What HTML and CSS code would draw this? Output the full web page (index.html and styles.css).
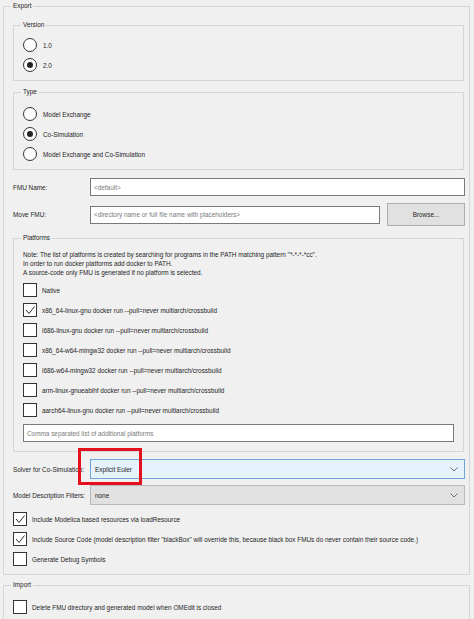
FILE: index.html
```html
<!DOCTYPE html>
<html>
<head>
<meta charset="utf-8">
<link rel="stylesheet" href="styles.css">
</head>
<body>
<div class="page">
  <fieldset class="group export">
    <legend>Export</legend>
    <fieldset class="group sub version">
      <legend>Version</legend>
      <div class="radio-row"><span class="radio"></span><span>1.0</span></div>
      <div class="radio-row"><span class="radio checked"></span><span>2.0</span></div>
    </fieldset>
    <fieldset class="group sub type">
      <legend>Type</legend>
      <div class="radio-row"><span class="radio"></span><span>Model Exchange</span></div>
      <div class="radio-row"><span class="radio checked"></span><span>Co-Simulation</span></div>
      <div class="radio-row"><span class="radio"></span><span>Model Exchange and Co-Simulation</span></div>
    </fieldset>
    <div class="form-row name-row">
      <span class="form-label">FMU Name:</span>
      <div class="input">&lt;default&gt;</div>
    </div>
    <div class="form-row move-row">
      <span class="form-label">Move FMU:</span>
      <div class="input">&lt;directory name or full file name with placeholders&gt;</div>
      <div class="button">Browse...</div>
    </div>
    <fieldset class="group sub platforms">
      <legend>Platforms</legend>
      <p class="note">Note: The list of platforms is created by searching for programs in the PATH matching pattern "*-*-*-*cc".<br>In order to run docker platforms add docker to PATH.<br>A source-code only FMU is generated if no platform is selected.</p>
      <div class="check-row"><span class="checkbox"></span><span>Native</span></div>
      <div class="check-row"><span class="checkbox"><svg viewBox="0 0 12 12" width="12" height="12"><polyline points="2,6 5,9.5 10.5,2.5" fill="none" stroke="#2a2a2a" stroke-width="1"/></svg></span><span>x86_64-linux-gnu docker run --pull=never multiarch/crossbuild</span></div>
      <div class="check-row"><span class="checkbox"></span><span>i686-linux-gnu docker run --pull=never multiarch/crossbuild</span></div>
      <div class="check-row"><span class="checkbox"></span><span>x86_64-w64-mingw32 docker run --pull=never multiarch/crossbuild</span></div>
      <div class="check-row"><span class="checkbox"></span><span>i686-w64-mingw32 docker run --pull=never multiarch/crossbuild</span></div>
      <div class="check-row"><span class="checkbox"></span><span>arm-linux-gnueabihf docker run --pull=never multiarch/crossbuild</span></div>
      <div class="check-row"><span class="checkbox"></span><span>aarch64-linux-gnu docker run --pull=never multiarch/crossbuild</span></div>
      <div class="input extra">Comma separated list of additional platforms</div>
    </fieldset>
    <div class="form-row solver-row">
      <span class="form-label">Solver for Co-Simulation:</span>
      <div class="combo active"><span>Explicit Euler</span><svg class="chev" viewBox="0 0 8 5" width="8" height="5"><polyline points="0.5,0.5 4,4 7.5,0.5" fill="none" stroke="#606060" stroke-width="0.9"/></svg></div>
      <div class="highlight"></div>
    </div>
    <div class="form-row filter-row">
      <span class="form-label">Model Description Filters:</span>
      <div class="combo plain"><span>none</span><svg class="chev" viewBox="0 0 8 5" width="8" height="5"><polyline points="0.5,0.5 4,4 7.5,0.5" fill="none" stroke="#606060" stroke-width="0.9"/></svg></div>
    </div>
    <div class="options">
      <div class="check-row"><span class="checkbox"><svg viewBox="0 0 12 12" width="12" height="12"><polyline points="2,6 5,9.5 10.5,2.5" fill="none" stroke="#2a2a2a" stroke-width="1"/></svg></span><span>Include Modelica based resources via loadResource</span></div>
      <div class="check-row"><span class="checkbox"><svg viewBox="0 0 12 12" width="12" height="12"><polyline points="2,6 5,9.5 10.5,2.5" fill="none" stroke="#2a2a2a" stroke-width="1"/></svg></span><span>Include Source Code (model description filter "blackBox" will override this, because black box FMUs do never contain their source code.)</span></div>
      <div class="check-row"><span class="checkbox"></span><span>Generate Debug Symbols</span></div>
    </div>
  </fieldset>
  <fieldset class="group import">
    <legend>Import</legend>
    <div class="check-row"><span class="checkbox"></span><span>Delete FMU directory and generated model when OMEdit is closed</span></div>
  </fieldset>
</div>
</body>
</html>
```
FILE: styles.css
```css
* { box-sizing: border-box; }
html, body { margin: 0; padding: 0; }
body {
  background: #f0f0f0;
  font-family: "Liberation Sans", Arial, sans-serif;
  font-size: 6.4px;
  color: #1e1e1e;
  width: 474px;
  height: 619px;
  overflow: hidden;
}
.page { padding-top: 1px; }
.group {
  margin: 0;
  border: 1px solid #d6d6d6;
  padding: 0;
  min-inline-size: 0;
}
.group > legend {
  padding: 0 2px;
  margin-left: -2px;
  line-height: 10px;
  height: 10px;
}
.export {
  margin: 0 4px 0 3px;
  padding: 9px 4px 5px 9px;
}
.sub { margin-right: 1px; }
.version { padding: 5px 9px 5px 9px; }
.type { margin-top: 6px; padding: 7px 9px 5px 9px; }
.radio-row {
  display: flex;
  align-items: center;
  height: 20px;
  gap: 6px;
}
.radio {
  width: 14px;
  height: 14px;
  border: 1px solid #333;
  border-radius: 50%;
  background: #fff;
  display: flex;
  align-items: center;
  justify-content: center;
  flex: none;
}
.radio.checked::after {
  content: "";
  width: 6px;
  height: 6px;
  border-radius: 50%;
  background: #222;
}
.form-row {
  display: flex;
  align-items: center;
}
.form-label {
  width: 77px;
  flex: none;
  white-space: nowrap;
}
.input {
  flex: 1;
  height: 18px;
  border: 1px solid #7a7a7a;
  background: #fff;
  color: #7a7a7a;
  padding-left: 3px;
  display: flex;
  align-items: center;
  white-space: nowrap;
  overflow: hidden;
}
.name-row { margin-top: 8px; height: 18px; }
.move-row { margin-top: 7px; height: 23px; gap: 7px; }
.move-row .form-label { margin-right: -7px; }
.button {
  width: 78px;
  height: 23px;
  flex: none;
  background: #e1e1e1;
  border: 1px solid #adadad;
  display: flex;
  align-items: center;
  justify-content: center;
}
.platforms { margin-top: 7px; padding: 7px 9px 9px 9px; }
.note { margin: 0 0 3px; line-height: 9px; }
.check-row {
  display: flex;
  align-items: center;
  height: 20px;
  gap: 5px;
  white-space: nowrap;
}
.checkbox {
  width: 14px;
  height: 14px;
  border: 1px solid #333;
  background: #fff;
  flex: none;
  display: flex;
  align-items: center;
  justify-content: center;
}
.checkbox svg { display: block; }
.extra { margin-top: 4px; flex: none; }
.solver-row { margin-top: 7px; height: 20px; position: relative; }
.filter-row { margin-top: 6px; height: 20px; }
.combo {
  flex: 1;
  height: 20px;
  display: flex;
  align-items: center;
  justify-content: space-between;
  padding: 0 6px 0 4px;
}
.combo.active { background: #e5f1fb; border: 1px solid #6ea7dd; }
.combo.plain { background: #e1e1e1; border: 1px solid #b9b9b9; }
.chev { display: block; }
.highlight {
  position: absolute;
  left: 65px;
  top: -11px;
  width: 64px;
  height: 37px;
  border: 3.5px solid #e5101d;
}
.options { margin-top: 4px; }
.import {
  margin: 5px 4px 0 3px;
  padding: 7px 4px 30px 9px;
}
```
